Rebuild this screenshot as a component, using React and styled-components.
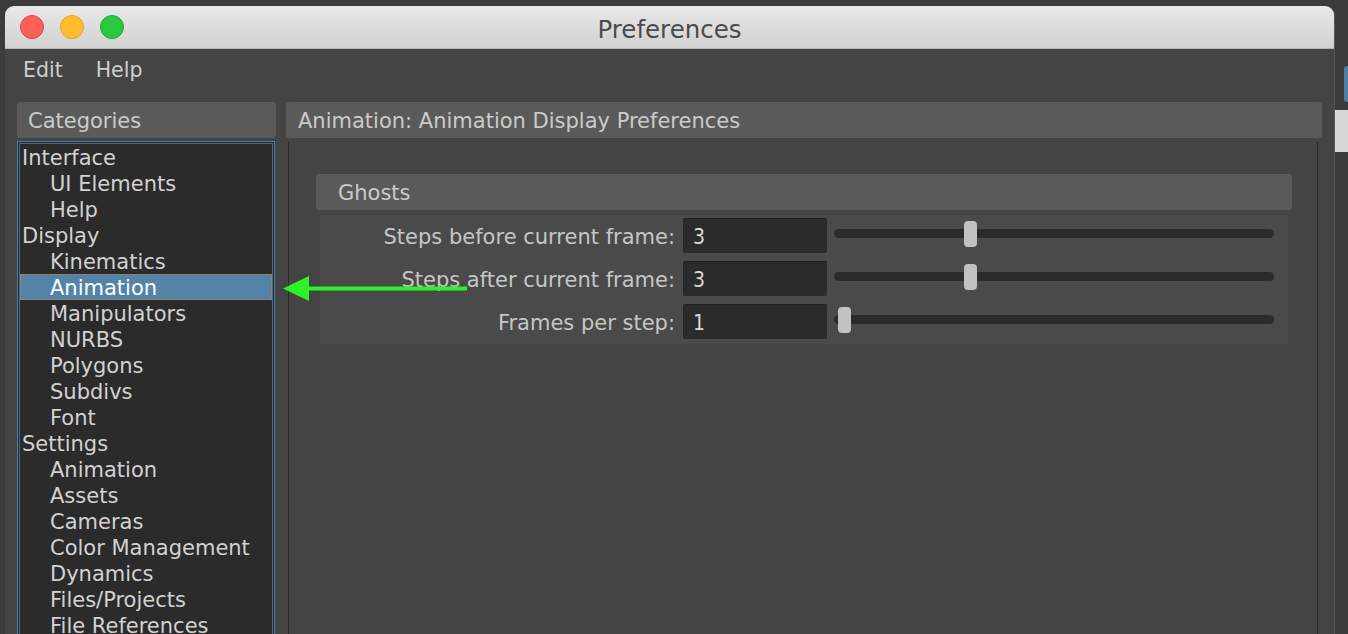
import styled, { createGlobalStyle } from 'styled-components';

const GlobalStyle = createGlobalStyle`
  html, body {
    margin: 0;
    padding: 0;
    background: #3b3b3b;
    overflow: hidden;
  }
  body {
    font-family: 'DejaVu Sans', 'Noto Sans', sans-serif;
  }
`;

const Desktop = styled.div`
  position: relative;
  width: 1348px;
  height: 634px;
  overflow: hidden;
  background: #3b3b3b;
  padding: 6px 0 0 5px;
  box-sizing: border-box;
`;

const BackdropBlue = styled.div`
  position: absolute;
  left: 1344px;
  top: 66px;
  width: 12px;
  height: 36px;
  border-radius: 3px;
  background: #4f7fa3;
`;

const BackdropLight = styled.div`
  position: absolute;
  left: 1335px;
  top: 110px;
  width: 20px;
  height: 42px;
  background: #d8d8d8;
`;

const Window = styled.div`
  position: relative;
  z-index: 1;
  width: 1329px;
  height: 700px;
  display: flex;
  flex-direction: column;
  border-radius: 9px 9px 0 0;
  overflow: hidden;
  background: #444444;
  box-shadow: 1px 0 0 #585858;
`;

const TitleBar = styled.div`
  height: 42px;
  flex: none;
  display: flex;
  align-items: center;
  position: relative;
  background: linear-gradient(#e9e9e9, #d1d1d1);
  border-bottom: 1px solid #b4b4b4;
`;

const Lights = styled.div`
  display: flex;
  gap: 16px;
  padding-left: 15px;
`;

const Light = styled.span`
  width: 24px;
  height: 24px;
  border-radius: 50%;
  box-sizing: border-box;
  background: ${({ $color }) => $color};
  border: 1px solid ${({ $edge }) => $edge};
`;

const Title = styled.div`
  position: absolute;
  left: 0;
  right: 0;
  top: 9px;
  text-align: center;
  font-size: 24.5px;
  color: #4b4b4b;
  pointer-events: none;
`;

const MenuBar = styled.div`
  height: 40px;
  flex: none;
  display: flex;
  align-items: center;
  gap: 33px;
  padding: 2px 0 0 18px;
  box-sizing: border-box;
  font-size: 20.5px;
  color: #cfcfcf;
`;

const Panes = styled.div`
  flex: 1;
  display: grid;
  grid-template-columns: 259px 1036px;
  gap: 10px;
  padding: 13px 12px 0;
  min-height: 0;
`;

const Pane = styled.div`
  display: flex;
  flex-direction: column;
  min-height: 0;
`;

const PaneHeader = styled.div`
  height: 36px;
  flex: none;
  box-sizing: border-box;
  display: flex;
  align-items: center;
  padding: 2px 0 0 ${({ $indent }) => $indent || 11}px;
  border-radius: 3px;
  background: #5a5a5a;
  color: #cbcbcb;
  font-size: 21px;
`;

const ListBox = styled.div`
  margin-top: 3px;
  flex: 1;
  width: 258px;
  box-sizing: border-box;
  border: 1px solid #4c7ca4;
  box-shadow: inset 0 0 0 1px #2b2b2b, inset 0 0 0 2px #3f6a8c;
  padding: 2px;
  background: #2b2b2b;
`;

const ListItem = styled.div`
  height: 26px;
  display: flex;
  align-items: center;
  box-sizing: border-box;
  padding: 2px 0 0 ${({ $child }) => ($child ? 30 : 2)}px;
  font-size: 21px;
  white-space: nowrap;
  color: ${({ $selected }) => ($selected ? '#ffffff' : '#d2d2d2')};
  background: ${({ $selected }) => ($selected ? '#5384a8' : 'transparent')};
  outline: ${({ $selected }) => ($selected ? '1px dotted #c9803f' : 'none')};
  outline-offset: -1px;
`;

const ScrollFrame = styled.div`
  flex: 1;
  margin: 4px 4px 0 2px;
  border-left: 1px solid #2a2a2a;
  border-right: 1px solid #2a2a2a;
  padding: 32px 25px 0 27px;
`;

const GroupHeader = styled.div`
  height: 36px;
  box-sizing: border-box;
  display: flex;
  align-items: center;
  padding: 2px 0 0 22px;
  border-radius: 3px;
  background: #5a5a5a;
  color: #cbcbcb;
  font-size: 21px;
`;

const GroupBody = styled.div`
  margin: 5px 4px 0;
  padding: 3px 14px 5px 0;
  display: flex;
  flex-direction: column;
  gap: 8px;
  background: #4a4a4a;
`;

const FieldRow = styled.div`
  height: 35px;
  display: grid;
  grid-template-columns: 355px 144px 1fr;
  column-gap: 8px;
  align-items: center;
`;

const FieldLabel = styled.div`
  padding-top: 2px;
  text-align: right;
  font-size: 21px;
  color: #c6c6c6;
  white-space: nowrap;
`;

const FieldInput = styled.div`
  height: 35px;
  box-sizing: border-box;
  display: flex;
  align-items: center;
  padding: 2px 0 0 9px;
  background: #2b2b2b;
  border-top: 1px solid #222;
  border-left: 1px solid #262626;
  border-radius: 2px;
  color: #dadada;
  font-size: 21px;
  font-family: 'DejaVu Sans Condensed', 'DejaVu Sans', sans-serif;
`;

const Slider = styled.div`
  position: relative;
  height: 26px;
  margin-left: -1px;
  margin-top: -4px;
  display: flex;
  align-items: center;
`;

const Track = styled.div`
  width: 100%;
  height: 9px;
  border-radius: 5px;
  background: #2b2b2b;
`;

const Thumb = styled.div`
  position: absolute;
  top: 0;
  width: 13px;
  height: 26px;
  border-radius: 4px;
  background: #c2c2c2;
`;

const ArrowOverlay = styled.svg`
  position: absolute;
  left: 280px;
  top: 272px;
  z-index: 2;
`;

const categories = [
  { label: 'Interface' },
  { label: 'UI Elements', child: true },
  { label: 'Help', child: true },
  { label: 'Display' },
  { label: 'Kinematics', child: true },
  { label: 'Animation', child: true, selected: true },
  { label: 'Manipulators', child: true },
  { label: 'NURBS', child: true },
  { label: 'Polygons', child: true },
  { label: 'Subdivs', child: true },
  { label: 'Font', child: true },
  { label: 'Settings' },
  { label: 'Animation', child: true },
  { label: 'Assets', child: true },
  { label: 'Cameras', child: true },
  { label: 'Color Management', child: true },
  { label: 'Dynamics', child: true },
  { label: 'Files/Projects', child: true },
  { label: 'File References', child: true },
];

const ghostFields = [
  { label: 'Steps before current frame:', value: 3, pos: 0.305 },
  { label: 'Steps after current frame:', value: 3, pos: 0.305 },
  { label: 'Frames per step:', value: 1, pos: 0.01 },
];

const TRACK_TRAVEL = 427;

const App = () => {
  return (
    <>
      <GlobalStyle />
      <Desktop>
        <BackdropBlue />
        <BackdropLight />
        <Window>
          <TitleBar>
            <Lights>
              <Light $color="#fe5f57" $edge="#e0443e" />
              <Light $color="#febc2e" $edge="#dea123" />
              <Light $color="#28c840" $edge="#1aab29" />
            </Lights>
            <Title>Preferences</Title>
          </TitleBar>

          <MenuBar>
            <span>Edit</span>
            <span>Help</span>
          </MenuBar>

          <Panes>
            {/* Category list */}
            <Pane>
              <PaneHeader>Categories</PaneHeader>
              <ListBox>
                {categories.map((item, i) => (
                  <ListItem key={i} $child={item.child} $selected={item.selected}>
                    {item.label}
                  </ListItem>
                ))}
              </ListBox>
            </Pane>

            {/* Preference page */}
            <Pane>
              <PaneHeader $indent={12}>Animation: Animation Display Preferences</PaneHeader>
              <ScrollFrame>
                <GroupHeader>Ghosts</GroupHeader>
                <GroupBody>
                  {ghostFields.map((field) => (
                    <FieldRow key={field.label}>
                      <FieldLabel>{field.label}</FieldLabel>
                      <FieldInput>{field.value}</FieldInput>
                      <Slider>
                        <Track />
                        <Thumb style={{ left: `${Math.round(field.pos * TRACK_TRAVEL)}px` }} />
                      </Slider>
                    </FieldRow>
                  ))}
                </GroupBody>
              </ScrollFrame>
            </Pane>
          </Panes>
        </Window>

        <ArrowOverlay width="192" height="34" viewBox="280 272 192 34">
          <path d="M283 288.5 L309 276 L309 301 Z" fill="#2bf22b" />
          <rect x="305" y="286.5" width="162" height="4" fill="#2bf22b" />
        </ArrowOverlay>
      </Desktop>
    </>
  );
};

export default App;
